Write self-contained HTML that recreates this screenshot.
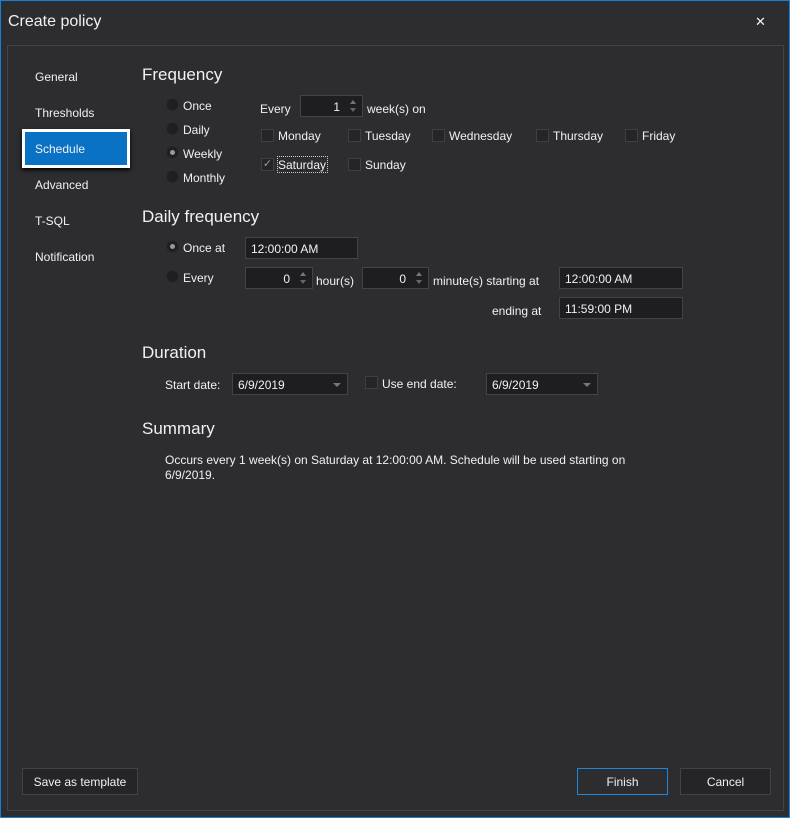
<!DOCTYPE html>
<html><head><meta charset="utf-8"><style>
*{box-sizing:border-box;margin:0;padding:0}
body{width:790px;height:818px;background:#2d2d30;font-family:"Liberation Sans",sans-serif;font-size:12px;color:#f1f1f1;position:relative;overflow:hidden}
.frame{position:absolute;left:0;top:0;width:790px;height:818px;border:1px solid #1c7fd6}
.a{position:absolute;white-space:nowrap}
.panel{position:absolute;left:7px;top:45px;width:777px;height:766px;border:1px solid #434346}
.h{font-size:17px;color:#f1f1f1}
.rb{position:absolute;width:13px;height:13px;border-radius:50%;background:#1f1f21;border:1px solid #2a2a2c}
.rb.on::after{content:"";position:absolute;left:3px;top:3px;width:5px;height:5px;border-radius:50%;background:#999}
.cb{position:absolute;width:13px;height:13px;border:1px solid #3f3f42;background:#252527}
.box{position:absolute;height:22px;border:1px solid #434346;background:#1e1e20;padding:4px 0 0 5px;white-space:nowrap}
.spin{position:absolute;height:22px;border:1px solid #434346;background:#1e1e20;text-align:right;padding:4px 22px 0 0}
.spin::before{content:"";position:absolute;right:6px;top:4px;border:3px solid transparent;border-bottom:4px solid #777;border-top:0}
.spin::after{content:"";position:absolute;right:6px;bottom:4px;border:3px solid transparent;border-top:4px solid #666;border-bottom:0}
.dd::after{content:"";position:absolute;right:6px;top:9px;border:4px solid transparent;border-top:4px solid #777;border-bottom:0}
.btn{position:absolute;height:27px;border:1px solid #434346;background:#252527;text-align:center;padding-top:6px}
</style></head><body>
<div class="frame"></div>
<div class="a" style="left:8px;top:13px;font-size:16px">Create policy</div>
<div class="a" style="left:755px;top:14px;font-size:13px">✕</div>
<div class="panel"></div>

<div class="a" style="left:35px;top:70px">General</div>
<div class="a" style="left:35px;top:106px">Thresholds</div>
<div class="a" style="left:22px;top:129px;width:108px;height:39px;background:#0a72c5;border:3px solid #fff;box-shadow:0 2px 4px #000"></div>
<div class="a" style="left:35px;top:142px">Schedule</div>
<div class="a" style="left:35px;top:178px">Advanced</div>
<div class="a" style="left:35px;top:214px">T-SQL</div>
<div class="a" style="left:35px;top:250px">Notification</div>

<div class="a h" style="left:142px;top:65px">Frequency</div>
<div class="rb" style="left:166px;top:98px"></div><div class="a" style="left:183px;top:99px">Once</div>
<div class="rb" style="left:166px;top:122px"></div><div class="a" style="left:183px;top:123px">Daily</div>
<div class="rb on" style="left:166px;top:146px"></div><div class="a" style="left:183px;top:147px">Weekly</div>
<div class="rb" style="left:166px;top:170px"></div><div class="a" style="left:183px;top:171px">Monthly</div>

<div class="a" style="left:260px;top:102px">Every</div>
<div class="spin" style="left:300px;top:95px;width:63px">1</div>
<div class="a" style="left:367px;top:102px">week(s) on</div>

<div class="cb" style="left:261px;top:129px"></div><div class="a" style="left:278px;top:129px">Monday</div>
<div class="cb" style="left:348px;top:129px"></div><div class="a" style="left:365px;top:129px">Tuesday</div>
<div class="cb" style="left:432px;top:129px"></div><div class="a" style="left:449px;top:129px">Wednesday</div>
<div class="cb" style="left:536px;top:129px"></div><div class="a" style="left:553px;top:129px">Thursday</div>
<div class="cb" style="left:625px;top:129px"></div><div class="a" style="left:642px;top:129px">Friday</div>
<div class="cb" style="left:261px;top:158px;color:#999;font-size:11px;line-height:11px;text-align:center">✓</div>
<div class="a" style="left:277px;top:156px;height:17px;border:1px dotted #ccc;padding:1px 1px 0 0">Saturday</div>
<div class="cb" style="left:348px;top:158px"></div><div class="a" style="left:365px;top:158px">Sunday</div>

<div class="a h" style="left:142px;top:207px">Daily frequency</div>
<div class="rb on" style="left:166px;top:240px"></div><div class="a" style="left:183px;top:241px">Once at</div>
<div class="box" style="left:245px;top:237px;width:113px">12:00:00 AM</div>
<div class="rb" style="left:166px;top:270px"></div><div class="a" style="left:183px;top:271px">Every</div>
<div class="spin" style="left:245px;top:267px;width:68px">0</div>
<div class="a" style="left:316px;top:274px">hour(s)</div>
<div class="spin" style="left:362px;top:267px;width:67px">0</div>
<div class="a" style="left:433px;top:274px">minute(s) starting at</div>
<div class="box" style="left:559px;top:267px;width:124px">12:00:00 AM</div>
<div class="a" style="left:492px;top:304px">ending at</div>
<div class="box" style="left:559px;top:297px;width:124px">11:59:00 PM</div>

<div class="a h" style="left:142px;top:343px">Duration</div>
<div class="a" style="left:165px;top:378px">Start date:</div>
<div class="box dd" style="left:232px;top:373px;width:116px">6/9/2019</div>
<div class="cb" style="left:365px;top:376px"></div><div class="a" style="left:382px;top:377px">Use end date:</div>
<div class="box dd" style="left:486px;top:373px;width:112px">6/9/2019</div>

<div class="a h" style="left:142px;top:419px">Summary</div>
<div class="a" style="left:165px;top:453px;line-height:15px">Occurs every 1 week(s) on Saturday at 12:00:00 AM. Schedule will be used starting on<br>6/9/2019.</div>

<div class="btn" style="left:22px;top:768px;width:116px">Save as template</div>
<div class="btn" style="left:577px;top:768px;width:91px;border-color:#1c86dc;background:#2d2d30">Finish</div>
<div class="btn" style="left:680px;top:768px;width:91px">Cancel</div>
</body></html>
